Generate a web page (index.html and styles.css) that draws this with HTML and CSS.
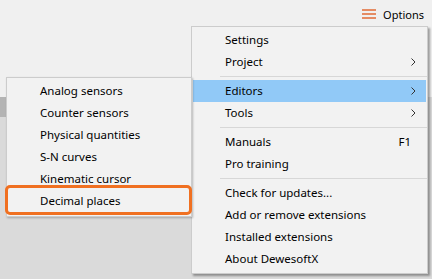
FILE: index.html
```html
<!DOCTYPE html>
<html lang="en">
<head>
    <meta charset="UTF-8">
    <title>Options menu</title>
    <link rel="stylesheet" href="styles.css">
</head>
<body>
    <div class="app">
        <div class="toolbar">
            <button class="options-btn">
                <svg width="14" height="10" viewBox="0 0 14 10">
                    <rect x="0" y="0" width="14" height="2" fill="#e58c64"/>
                    <rect x="0" y="4" width="14" height="2" fill="#e58c64"/>
                    <rect x="0" y="8" width="14" height="2" fill="#e58c64"/>
                </svg>
                Options
            </button>
        </div>
        <div class="workspace">
            <div class="side-block"></div>
        </div>

        <!-- main popup menu -->
        <ul class="menu main-menu">
            <li class="item">Settings</li>
            <li class="item">Project <span class="arrow"><svg width="5" height="8" viewBox="0 0 5 8"><polyline points="0.5,0.5 4,4 0.5,7.5" fill="none" stroke="#333" stroke-width="1"/></svg></span></li>
            <li class="sep"></li>
            <li class="item active">Editors <span class="arrow"><svg width="5" height="8" viewBox="0 0 5 8"><polyline points="0.5,0.5 4,4 0.5,7.5" fill="none" stroke="#333" stroke-width="1"/></svg></span></li>
            <li class="item">Tools <span class="arrow"><svg width="5" height="8" viewBox="0 0 5 8"><polyline points="0.5,0.5 4,4 0.5,7.5" fill="none" stroke="#333" stroke-width="1"/></svg></span></li>
            <li class="sep"></li>
            <li class="item">Manuals <span class="shortcut">F1</span></li>
            <li class="item">Pro training</li>
            <li class="sep"></li>
            <li class="item">Check for updates...</li>
            <li class="item">Add or remove extensions</li>
            <li class="item">Installed extensions</li>
            <li class="item">About DewesoftX</li>
        </ul>

        <!-- Editors submenu -->
        <ul class="menu sub-menu">
            <li class="item">Analog sensors</li>
            <li class="item">Counter sensors</li>
            <li class="item">Physical quantities</li>
            <li class="item">S-N curves</li>
            <li class="item">Kinematic cursor</li>
            <li class="item">Decimal places</li>
        </ul>

        <div class="callout"></div>
    </div>
</body>
</html>
```

FILE: styles.css
```css
body {
    margin: 0;
    font-family: "Noto Sans", sans-serif;
    font-size: 11.5px;
    color: #000;
}
.app {
    position: relative;
    width: 432px;
    height: 279px;
    overflow: hidden;
    display: flex;
    flex-direction: column;
    background-color: #dadada;
}
.toolbar {
    height: 97px;
    background-color: #f0f0f0;
    display: flex;
    justify-content: flex-end;
    align-items: flex-start;
}
.options-btn {
    display: flex;
    align-items: center;
    gap: 7px;
    margin: 4px 8px 0 0;
    padding: 0;
    height: 20px;
    border: none;
    background: none;
    font-family: inherit;
    font-size: 11px;
    color: #000;
}
.workspace {
    flex: 1;
}
.side-block {
    width: 6px;
    height: 20px;
    background-color: #b4b4b4;
}
.menu {
    position: absolute;
    list-style: none;
    margin: 0;
    background-color: #f2f2f2;
    border: 1px solid #cccccc;
}
.main-menu {
    left: 191px;
    top: 26px;
    width: 235px;
    padding: 2px 0 3px;
    box-shadow: 2px 2px 2px rgba(0, 0, 0, 0.35);
}
.sub-menu {
    left: 6px;
    top: 77px;
    width: 184px;
    padding: 2px 0 4px;
    box-shadow: 1px 1px 2px rgba(0, 0, 0, 0.25);
}
.item {
    height: 21px;
    display: flex;
    align-items: center;
    justify-content: space-between;
    padding: 0 8px 1px 32px;
    margin: 0 1px;
}
.sub-menu .item {
    padding-left: 32px;
}
.active {
    background-color: #91c9f7;
}
.arrow {
    display: flex;
    padding-right: 2px;
}
.shortcut {
    padding-right: 7px;
}
.sep {
    height: 1px;
    margin: 3px 0 3px 28px;
    background-color: #d7d7d7;
}
.callout {
    position: absolute;
    left: 5px;
    top: 185px;
    width: 181px;
    height: 24px;
    border: 3px solid #f07021;
    border-radius: 5px;
}
```
